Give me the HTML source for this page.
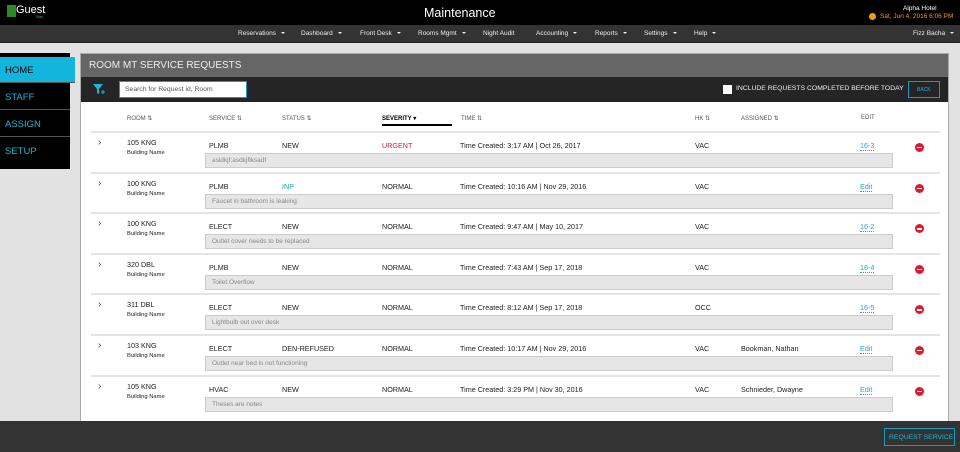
<!DOCTYPE html>
<html><head><meta charset="utf-8"><style>
*{margin:0;padding:0;box-sizing:border-box}
body{width:960px;height:452px;overflow:hidden;background:#e2e2e2;font-family:"Liberation Sans",sans-serif;position:relative;font-size:7px;color:#222}
.a{position:absolute}
#top{left:0;top:0;width:960px;height:25px;background:#000}
#nav{left:0;top:25px;width:960px;height:18px;background:#333;border-bottom:1px solid #222}
#nav span{position:absolute;top:5px;color:#eee;font-size:6.5px}
.car{display:inline-block;margin-left:5px;border-left:2.5px solid transparent;border-right:2.5px solid transparent;border-top:2.5px solid #eee;vertical-align:middle}
#side{left:0;top:53px;width:70px;height:116px;background:#000}
.si{position:absolute;left:0;width:70px;height:26px;border-bottom:1px solid #555;color:#1fb6d6;font-size:9.5px;padding:8px 0 0 5px}
#panel{left:80px;top:53px;width:869px;height:392px;background:#fff;border:1px solid #aaa}
#ph{left:0;top:0;width:867px;height:23px;background:#666;color:#eee;font-size:10px;padding:6px 0 0 8px}
#tb{left:0;top:23px;width:867px;height:25px;background:#252525}
.hd{position:absolute;top:61px;color:#555;font-size:6px}
.row{position:absolute;left:10px;width:849px;height:41px;border-top:2px solid #e4e4e4}
.row .t{position:absolute;top:8px;font-size:7.2px;color:#222}
.note{position:absolute;left:114px;top:20px;width:688px;height:15px;background:#e6e6e6;border:1px solid #ccc;color:#888;font-size:6.5px;padding:3px 0 0 6px}
.min{position:absolute;left:824px;top:10px;width:9px;height:9px;border-radius:50%;background:#e0182d}
.min:after{content:"";position:absolute;left:2px;top:4px;width:5px;height:1.4px;background:#fff}
.ed{color:#2aa3c9;border-bottom:1px dotted #2aa3c9}
#bot{left:0;top:421px;width:960px;height:31px;background:#333}
</style></head><body>
<div class="a" id="top">
 <div class="a" style="left:7px;top:5px;width:9px;height:12px;background:#2a8a2a"></div>
 <div class="a" style="left:16px;top:4px;color:#fff;font-size:11px">Guest</div>
 <div class="a" style="left:36px;top:15px;color:#3a8;font-size:3.5px">Stay</div>
 <div class="a" style="left:424px;top:6px;color:#fff;font-size:12.5px">Maintenance</div>
 <div class="a" style="left:903px;top:5px;color:#fff;font-size:6.5px">Alpha Hotel</div>
 <div class="a" style="left:869px;top:13px;width:7px;height:7px;border-radius:50%;background:#f09a1a"></div>
 <div class="a" style="left:880px;top:13px;color:#f09a1a;font-size:6.5px">Sat, Jun 4, 2016 6:06 PM</div>
</div>
<div class="a" id="nav">
 <span style="left:238px">Reservations<i class="car"></i></span>
 <span style="left:301px">Dashboard<i class="car"></i></span>
 <span style="left:360px">Front Desk<i class="car"></i></span>
 <span style="left:418px">Rooms Mgmt<i class="car"></i></span>
 <span style="left:483px">Night Audit</span>
 <span style="left:536px">Accounting<i class="car"></i></span>
 <span style="left:595px">Reports<i class="car"></i></span>
 <span style="left:644px">Settings<i class="car"></i></span>
 <span style="left:694px">Help<i class="car"></i></span>
 <span style="left:913px">Fizz Bacha<i class="car"></i></span>
</div>
<div class="a" id="side">
 <div class="si" style="top:4px;width:75px;background:#12b6dc;color:#000">HOME</div>
 <div class="si" style="top:31px">STAFF</div>
 <div class="si" style="top:58px">ASSIGN</div>
 <div class="si" style="top:85px;border:none">SETUP</div>
</div>
<div class="a" id="panel">
 <div class="a" id="ph">ROOM MT SERVICE REQUESTS</div>
 <div class="a" id="tb">
  <svg class="a" style="left:12px;top:6px" width="12" height="12" viewBox="0 0 12 12"><path d="M0 1h10L6 6v5L4 10V6z" fill="#1fb6d6"/><path d="M8 9h4M10 7v4" stroke="#1fb6d6" stroke-width="1"/></svg>
  <div class="a" style="left:38px;top:4px;width:128px;height:17px;background:#fff;border:1px solid #1a9ab8;color:#555;font-size:6.8px;padding:4px 0 0 5px">Search for Request id, Room</div>
  <div class="a" style="left:642px;top:8px;width:9px;height:9px;background:#fff"></div>
  <div class="a" style="left:655px;top:8px;color:#eee;font-size:6.8px">INCLUDE REQUESTS COMPLETED BEFORE TODAY</div>
  <div class="a" style="left:827px;top:4px;width:32px;height:17px;border:1px solid #1a9ab8;color:#1fb6d6;font-size:5px;padding:5px 0 0 8px">BACK</div>
 </div>
 <div class="hd" style="left:46px">ROOM ⇅</div>
 <div class="hd" style="left:128px">SERVICE ⇅</div>
 <div class="hd" style="left:201px">STATUS ⇅</div>
 <div class="hd" style="left:301px;color:#000;font-weight:bold">SEVERITY ▾</div>
 <div class="a" style="left:301px;top:70px;width:70px;height:2px;background:#000"></div>
 <div class="hd" style="left:380px">TIME ⇅</div>
 <div class="hd" style="left:614px">HK ⇅</div>
 <div class="hd" style="left:660px">ASSIGNED ⇅</div>
 <div class="hd" style="left:780px">EDIT</div>
 <div id="rows"></div>
</div>
<div class="a" id="bot"><div class="a" style="left:884px;top:7px;width:71px;height:18px;border:1px solid #1a9ab8;color:#1fb6d6;font-size:6.8px;padding:5px 0 0 4px">REQUEST SERVICE</div></div>
<script>
var d=[["105 KNG","PLMB","NEW","URGENT","3:17 AM | Oct 26, 2017","VAC","","16-3","asldkjf;asdkjflksadf"],
["100 KNG","PLMB","INP","NORMAL","10:16 AM | Nov 29, 2016","VAC","","Edit","Faucet in bathroom is leaking"],
["100 KNG","ELECT","NEW","NORMAL","9:47 AM | May 10, 2017","VAC","","16-2","Outlet cover needs to be replaced"],
["320 DBL","PLMB","NEW","NORMAL","7:43 AM | Sep 17, 2018","VAC","","16-4","Toilet Overflow"],
["311 DBL","ELECT","NEW","NORMAL","8:12 AM | Sep 17, 2018","OCC","","16-5","Lightbulb out over desk"],
["103 KNG","ELECT","DEN-REFUSED","NORMAL","10:17 AM | Nov 29, 2016","VAC","Bookman, Nathan","Edit","Outlet near bed is not functioning"],
["105 KNG","HVAC","NEW","NORMAL","3:29 PM | Nov 30, 2016","VAC","Schnieder, Dwayne","Edit","Theses are notes"]];
var h="";d.forEach(function(r,i){var y=77+i*40.6;
h+='<div class="row" style="top:'+y+'px"><div class="t" style="left:7px;font-size:10px;top:4px;color:#444">&#8250;</div><div class="t" style="left:36px;top:5px">'+r[0]+'<br><span style="font-size:5.8px">Building Name</span></div><div class="t" style="left:118px">'+r[1]+'</div><div class="t" style="left:191px;color:'+(r[2]=="INP"?"#2a9a9a":"#222")+'">'+r[2]+'</div><div class="t" style="left:291px;color:'+(r[3]=="URGENT"?"#e0182d":"#222")+'">'+r[3]+'</div><div class="t" style="left:369px">Time Created: '+r[4]+'</div><div class="t" style="left:604px">'+r[5]+'</div><div class="t" style="left:650px">'+r[6]+'</div><div class="t" style="left:769px"><span class="ed">'+r[7]+'</span></div><div class="min"></div><div class="note">'+r[8]+'</div></div>';});
document.getElementById("rows").innerHTML=h;
</script>
</body></html>
